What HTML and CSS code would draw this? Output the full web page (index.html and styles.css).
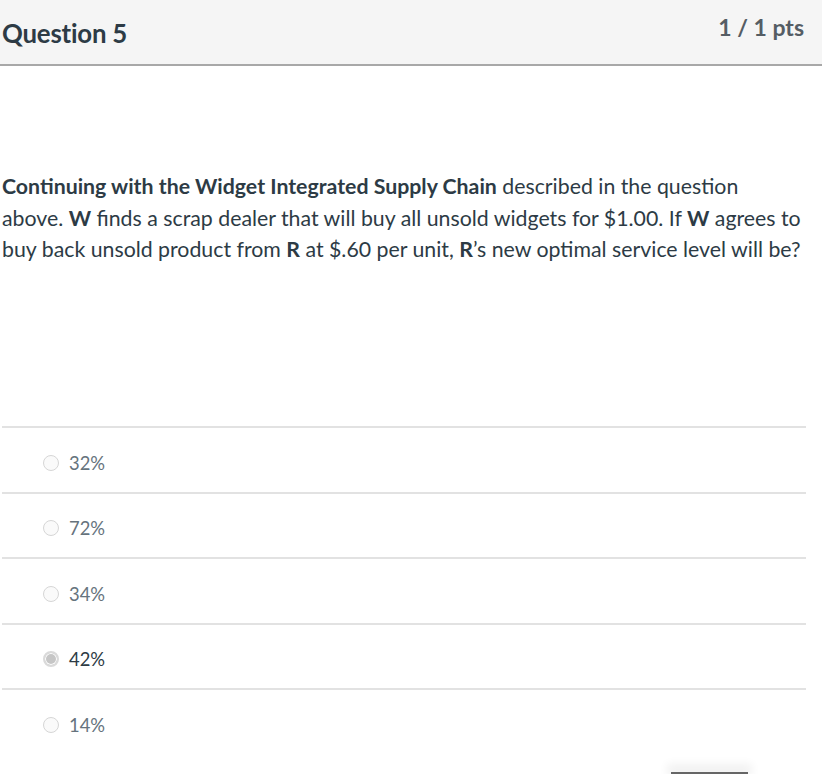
FILE: index.html
```html
<!DOCTYPE html>
<html>
<head>
<meta charset="utf-8">
<link rel="stylesheet" href="styles.css">
</head>
<body>
<div class="question">
  <div class="header">
    <span class="title">Question 5</span>
    <span class="pts">1 / 1 pts</span>
  </div>
  <div class="text">
    <p><strong>Continuing with the Widget Integrated Supply Chain</strong> described in the question above. <strong>W</strong> finds a scrap dealer that will buy all unsold widgets for $1.00. If <strong>W</strong> agrees to buy back unsold product from <strong>R</strong> at $.60 per unit, <strong>R</strong>’s new optimal service level will be?</p>
  </div>
  <div class="answers">
    <div class="answer"><span class="radio"></span><span class="label">32%</span></div>
    <div class="answer"><span class="radio"></span><span class="label">72%</span></div>
    <div class="answer"><span class="radio"></span><span class="label">34%</span></div>
    <div class="answer selected"><span class="radio"></span><span class="label">42%</span></div>
    <div class="answer"><span class="radio"></span><span class="label">14%</span></div>
  </div>
  <div class="footer"><span class="btn-edge"></span></div>
</div>
</body>
</html>
```
FILE: styles.css
```css
* { box-sizing: border-box; }
html, body { margin: 0; padding: 0; background: #fff; }
body {
  font-family: Lato, "Open Sans", sans-serif;
  color: #2d3b45;
  width: 822px;
  height: 774px;
  overflow: hidden;
}
.question { width: 822px; }
.header {
  height: 66px;
  background: #f5f5f5;
  border-bottom: 2px solid #a8a8a8;
  display: flex;
  justify-content: space-between;
  align-items: flex-start;
  padding: 0 18px 0 2px;
}
.title {
  font-size: 25.8px;
  font-weight: 700;
  color: #2d3b45;
  margin-top: 18px;
  letter-spacing: -0.2px;
}
.pts {
  font-size: 23px;
  font-weight: 700;
  color: #555d64;
  margin-top: 13px;
}
.text {
  padding: 105px 21px 0 2px;
  height: 360px;
}
.text p {
  margin: 0;
  font-size: 21.3px;
  line-height: 31.5px;
  color: #2d3b45;
}
.text strong { font-weight: 700; }
.answers { padding-left: 2px; width: 806px; }
.answer {
  height: 65.5px;
  border-top: 2px solid #e2e2e2;
  display: flex;
  align-items: center;
  padding: 6px 0 0 41px;
  gap: 10px;
}
.radio {
  width: 16px;
  height: 16px;
  border-radius: 50%;
  border: 1.5px solid #d6d6d6;
  background: #fafafa;
  flex: none;
}
.selected .radio {
  background: #c6c6c6;
  border: 2px solid #dadada;
  box-shadow: inset 0 0 0 1px #fff;
}
.label {
  font-size: 18.4px;
  color: #66737d;
}
.selected .label { color: #2d3b45; }
.footer {
  position: relative;
  height: 21px;
}
.btn-edge {
  position: absolute;
  left: 671px;
  top: 18px;
  width: 77px;
  height: 4px;
  background: #666;
  box-shadow: 0 -4px 10px 4px rgba(0,0,0,0.06);
}
```
